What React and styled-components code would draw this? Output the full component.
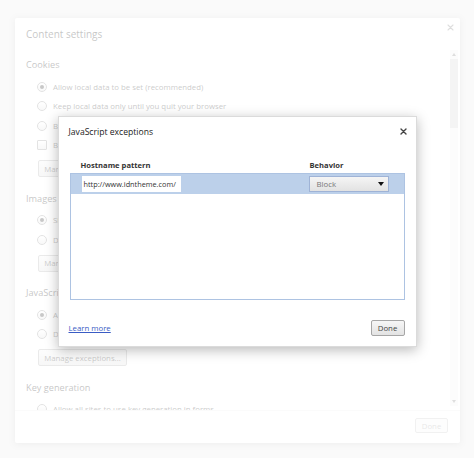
import React from "react";
import styled, { createGlobalStyle } from "styled-components";

const Global = createGlobalStyle`
  html, body { margin: 0; padding: 0; }
  body {
    background: #ebebeb;
    font-family: "Open Sans", "Noto Sans", sans-serif;
    -webkit-font-smoothing: antialiased;
  }
  #root { width: 474px; height: 458px; position: relative; overflow: hidden; }
`;

/* ---------- settings page behind the modal ---------- */

const Page = styled.div`
  width: 474px;
  height: 458px;
  box-sizing: border-box;
  padding: 18px 14px 15px 15px;
  display: flex;
  background: #ebebeb;
`;

const SettingsDialog = styled.div`
  flex: 1;
  display: flex;
  flex-direction: column;
  background: #fff;
  border-radius: 2px;
  box-shadow: 0 1px 6px rgba(0, 0, 0, 0.18);
  color: #333;
  min-width: 0;
`;

const SettingsHeader = styled.div`
  height: 32px;
  flex: none;
  display: flex;
  align-items: center;
  justify-content: space-between;
  padding: 0 6px 0 11px;
`;

const SettingsTitle = styled.h1`
  margin: 0;
  font-size: 10px;
  font-weight: 400;
  color: #333;
`;

const CloseButton = styled.span`
  width: 7px;
  height: 7px;
  display: flex;
  align-self: ${(p) => (p.$top ? "flex-start" : "center")};
  margin-top: ${(p) => (p.$top ? "6px" : "0")};
  svg { display: block; }
`;

const ScrollArea = styled.div`
  flex: 1;
  min-height: 0;
  display: flex;
`;

const ScrollContent = styled.div`
  flex: 1;
  overflow: hidden;
  padding: 5px 0 0 11px;
  display: flex;
  flex-direction: column;
`;

const Scrollbar = styled.div`
  width: 8px;
  margin: 0 2px 4px 0;
  background: #f3f3f3;
  display: flex;
  flex-direction: column;
  align-items: center;
`;

const ScrollArrow = styled.span`
  width: 0;
  height: 0;
  margin: 3px 0;
  border-left: 2.5px solid transparent;
  border-right: 2.5px solid transparent;
  ${(p) =>
    p.$down
      ? "border-top: 3px solid #8a8a8a; margin-top: auto;"
      : "border-bottom: 3px solid #8a8a8a;"}
`;

const ScrollThumb = styled.span`
  width: 8px;
  height: 69px;
  background: #d8d8d8;
`;

const SectionTitle = styled.h2`
  margin: 0 0 2px;
  height: 20px;
  line-height: 20px;
  font-size: 9.2px;
  font-weight: 400;
  color: #333;
  flex: none;
`;

const OptionRow = styled.label`
  height: 19.5px;
  flex: none;
  display: flex;
  align-items: center;
  gap: 6px;
  padding-left: 11px;
  font-size: 7.8px;
  color: #444;
  white-space: nowrap;
`;

const Radio = styled.span`
  width: 10px;
  height: 10px;
  box-sizing: border-box;
  border-radius: 50%;
  border: 1px solid #9a9a9a;
  background: linear-gradient(#ffffff, #e6e6e6);
  display: flex;
  align-items: center;
  justify-content: center;
  flex: none;
  &::after {
    content: "";
    width: 4px;
    height: 4px;
    border-radius: 50%;
    background: ${(p) => (p.$checked ? "#3c3c3c" : "transparent")};
  }
`;

const Checkbox = styled.span`
  width: 10px;
  height: 10px;
  box-sizing: border-box;
  border-radius: 1px;
  border: 1px solid #9a9a9a;
  background: linear-gradient(#ffffff, #e6e6e6);
  flex: none;
`;

const GrayButton = styled.button`
  font-family: inherit;
  font-size: 7.8px;
  color: #444;
  height: ${(p) => p.$h || 17}px;
  padding: 0 ${(p) => p.$px ?? 7}px;
  box-sizing: border-box;
  border: 1px solid #b4b4b4;
  border-radius: 2px;
  background: linear-gradient(#f6f6f6, #e3e3e3);
  display: flex;
  align-items: center;
  justify-content: center;
  white-space: nowrap;
  flex: none;
  cursor: default;
`;

const ManageButton = styled(GrayButton)`
  align-self: flex-start;
  margin: 5px 0 11.5px 12px;
  width: 89px;
  padding: 0;
`;

const SettingsFooter = styled.div`
  height: 33px;
  flex: none;
  box-sizing: border-box;
  display: flex;
  justify-content: flex-end;
  align-items: flex-start;
  padding: 7px 12px 0;
  border-top: 1px solid #f0f0f0;
`;

const DisabledDone = styled(GrayButton)`
  width: 33px;
  color: #aaa;
  border-color: #ccc;
  background: #f8f8f8;
`;

/* ---------- modal layer ---------- */

const Backdrop = styled.div`
  position: absolute;
  inset: 0;
  background: rgba(255, 255, 255, 0.72);
  display: flex;
  justify-content: center;
  align-items: flex-start;
  padding-top: 116px;
  box-sizing: border-box;
`;

const ExceptionsDialog = styled.div`
  width: 359px;
  height: 231px;
  box-sizing: border-box;
  background: #fff;
  border: 1px solid rgba(0, 0, 0, 0.14);
  box-shadow: 0 3px 12px rgba(0, 0, 0, 0.28);
  display: flex;
  flex-direction: column;
  color: #333;
`;

const DialogHeader = styled.div`
  height: 29px;
  display: flex;
  justify-content: space-between;
  align-items: center;
  padding: 0 9px 0 10px;
`;

const DialogTitle = styled.h1`
  margin: 0;
  font-size: 8.6px;
  font-weight: 400;
  color: #222;
`;

const DialogBody = styled.div`
  padding: 11px 11px 0;
  display: flex;
  flex-direction: column;
`;

const ColumnHeads = styled.div`
  height: 16px;
  display: grid;
  grid-template-columns: 229px 1fr;
  align-items: center;
  padding-left: 11px;
  font-size: 7.6px;
  font-weight: 700;
  color: #333;
`;

const ExceptionTable = styled.div`
  height: 127px;
  box-sizing: border-box;
  border: 1px solid #adc3e2;
  display: flex;
  flex-direction: column;
`;

const ExceptionRow = styled.div`
  height: 20px;
  flex: none;
  display: grid;
  grid-template-columns: 227px 80px;
  align-items: center;
  padding-left: 11px;
  background: ${(p) => (p.$selected ? "#bcd0ea" : "transparent")};
`;

const PatternInput = styled.div`
  width: 99px;
  height: 16px;
  box-sizing: border-box;
  background: #fff;
  padding-left: 2px;
  display: flex;
  align-items: center;
  font-size: 7.3px;
  color: #333;
  white-space: nowrap;
  overflow: hidden;
`;

const BehaviorSelect = styled.div`
  height: 16px;
  box-sizing: border-box;
  border: 1px solid #9fb3d6;
  background: linear-gradient(#f5f5f5, #e2e2e2);
  display: flex;
  align-items: center;
  justify-content: space-between;
  padding: 0 4px 0 7px;
  font-size: 7.8px;
  color: #777;
`;

const SelectArrow = styled.span`
  width: 0;
  height: 0;
  border-left: 3px solid transparent;
  border-right: 3px solid transparent;
  border-top: 4px solid #111;
`;

const DialogFooter = styled.div`
  flex: 1;
  display: flex;
  justify-content: space-between;
  align-items: center;
  padding: 10px 11px 0 10px;
`;

const LearnMore = styled.a`
  font-size: 7.8px;
  color: #3a5cc4;
  text-decoration: underline;
  cursor: pointer;
`;

const DoneButton = styled(GrayButton)`
  width: 34px;
  height: 16px;
  color: #444;
  border-color: #a6a6a6;
`;

const Cross = ({ color, weight = 1.4 }) => (
  <svg width="7" height="7" viewBox="0 0 7 7">
    <path d="M1 1 L6 6 M6 1 L1 6" stroke={color} strokeWidth={weight} strokeLinecap="round" />
  </svg>
);

const sections = [
  {
    title: "Cookies",
    options: [
      { kind: "radio", checked: true, text: "Allow local data to be set (recommended)" },
      { kind: "radio", text: "Keep local data only until you quit your browser" },
      { kind: "radio", text: "Block sites from setting any data" },
      { kind: "check", text: "Block third-party cookies and site data" },
    ],
    manage: true,
  },
  {
    title: "Images",
    options: [
      { kind: "radio", checked: true, text: "Show all images (recommended)" },
      { kind: "radio", text: "Do not show any images" },
    ],
    manage: true,
  },
  {
    title: "JavaScript",
    options: [
      { kind: "radio", checked: true, text: "Allow all sites to run JavaScript (recommended)" },
      { kind: "radio", text: "Do not allow any site to run JavaScript" },
    ],
    manage: true,
  },
  {
    title: "Key generation",
    options: [
      { kind: "radio", text: "Allow all sites to use key generation in forms" },
      { kind: "radio", checked: true, text: "Do not allow any site to use key generation in forms" },
    ],
    manage: false,
  },
];

export default function App() {
  return (
    <>
      <Global />
      <Page>
        <SettingsDialog>
          <SettingsHeader>
            <SettingsTitle>Content settings</SettingsTitle>
            <CloseButton $top>
              <Cross color="#888" weight={1.1} />
            </CloseButton>
          </SettingsHeader>
          <ScrollArea>
            <ScrollContent>
              {sections.map((s) => (
                <React.Fragment key={s.title}>
                  <SectionTitle>{s.title}</SectionTitle>
                  {s.options.map((o) => (
                    <OptionRow key={o.text}>
                      {o.kind === "radio" ? <Radio $checked={o.checked} /> : <Checkbox />}
                      {o.text}
                    </OptionRow>
                  ))}
                  {s.manage && <ManageButton>Manage exceptions...</ManageButton>}
                </React.Fragment>
              ))}
            </ScrollContent>
            <Scrollbar>
              <ScrollArrow />
              <ScrollThumb />
              <ScrollArrow $down />
            </Scrollbar>
          </ScrollArea>
          <SettingsFooter>
            <DisabledDone $h={15}>Done</DisabledDone>
          </SettingsFooter>
        </SettingsDialog>
      </Page>

      <Backdrop>
        <ExceptionsDialog>
          <DialogHeader>
            <DialogTitle>JavaScript exceptions</DialogTitle>
            <CloseButton>
              <Cross color="#444" weight={1.4} />
            </CloseButton>
          </DialogHeader>
          <DialogBody>
            <ColumnHeads>
              <span>Hostname pattern</span>
              <span>Behavior</span>
            </ColumnHeads>
            <ExceptionTable>
              <ExceptionRow $selected>
                <PatternInput>http://www.idntheme.com/</PatternInput>
                <BehaviorSelect>
                  Block
                  <SelectArrow />
                </BehaviorSelect>
              </ExceptionRow>
            </ExceptionTable>
          </DialogBody>
          <DialogFooter>
            <LearnMore>Learn more</LearnMore>
            <DoneButton>Done</DoneButton>
          </DialogFooter>
        </ExceptionsDialog>
      </Backdrop>
    </>
  );
}
